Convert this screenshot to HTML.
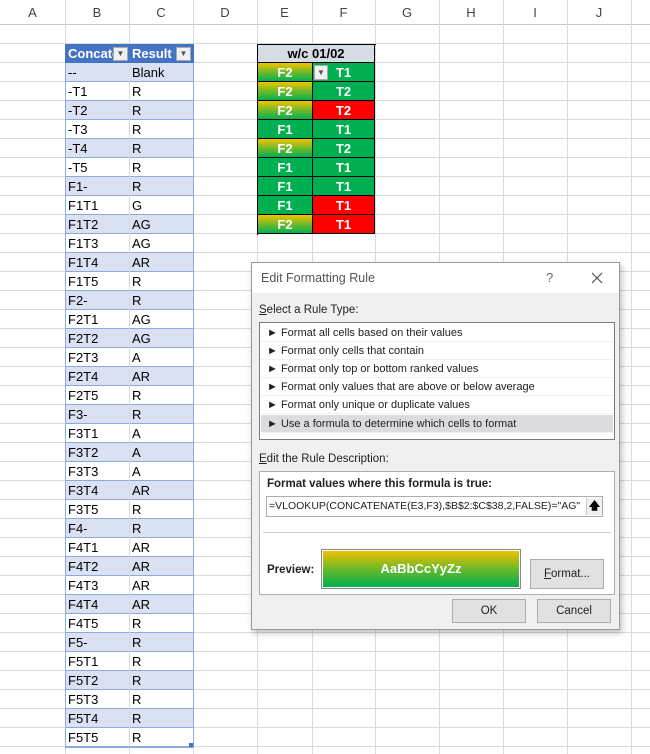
<!DOCTYPE html>
<html><head><meta charset="utf-8"><style>
*{margin:0;padding:0;box-sizing:border-box}
body{width:650px;height:754px;overflow:hidden;background:#fff;font-family:"Liberation Sans",sans-serif;position:relative}
.hdr{position:absolute;top:0;left:0;width:650px;height:25px;background:#fff;border-bottom:1px solid #c8c8c8}
.hdr span{position:absolute;top:5px;font-size:13px;color:#444;text-align:center}
.grid{position:absolute;top:25px;left:0;width:650px;height:729px;background:repeating-linear-gradient(to bottom,transparent 0 18px,#dadada 18px 19px)}
.vl{position:absolute;top:0;width:1px;height:754px;background:#dadada}
.c{position:absolute;height:19px;font-size:13px;line-height:19px;padding-left:3px;color:#000;white-space:nowrap;overflow:hidden}
.e{position:absolute;height:19px;font-size:13px;line-height:19px;text-align:center;color:#fff;font-weight:bold;border-right:1px solid #000;border-bottom:1px solid #000}
.y{background:linear-gradient(to bottom,#f2c200,#5cb830 60%,#00b050)}
.g{background:#00b050}.r{background:#ff0000}
.dlg{position:absolute;left:251px;top:262px;width:369px;height:368px;background:#f0f0f0;border:1px solid #9a9a9a;box-shadow:2px 3px 6px rgba(0,0,0,.25)}
.dlg .t{position:absolute;left:0;top:0;width:367px;height:30px;background:#fff}
.dt{position:absolute;font-size:11.5px;color:#222;white-space:nowrap}
.li{position:absolute;left:1px;width:352px;height:18px;font-size:11px;line-height:18px;padding-left:6px;border-bottom:1px solid #f0f0f0;white-space:nowrap;color:#222}
.btn{position:absolute;background:#e1e1e1;border:1px solid #adadad;font-size:11.5px;text-align:center;color:#222}
</style></head><body>
<div class="grid"></div>
<div class="hdr">
<span style="left:0;width:65px">A</span><span style="left:65px;width:64px">B</span><span style="left:129px;width:64px">C</span><span style="left:193px;width:64px">D</span><span style="left:257px;width:55px">E</span><span style="left:312px;width:63px">F</span><span style="left:375px;width:64px">G</span><span style="left:439px;width:64px">H</span><span style="left:503px;width:64px">I</span><span style="left:567px;width:64px">J</span>
</div>
<div class="vl" style="left:65px"></div><div class="vl" style="left:129px"></div><div class="vl" style="left:193px"></div><div class="vl" style="left:257px"></div><div class="vl" style="left:312px"></div><div class="vl" style="left:375px"></div><div class="vl" style="left:439px"></div><div class="vl" style="left:503px"></div><div class="vl" style="left:567px"></div><div class="vl" style="left:631px"></div>

<div style="position:absolute;left:65px;top:44px;width:129px;height:19px;background:#4472c4"></div>
<div style="position:absolute;left:65px;top:63px;width:129px;height:685px;border-left:1px solid #8ea9db;border-right:1px solid #8ea9db;border-bottom:1px solid #8ea9db;background:repeating-linear-gradient(to bottom,#d9e1f2 0 18px,#8ea9db 18px 19px,#fff 19px 37px,#8ea9db 37px 38px)"></div>
<div style="position:absolute;left:129px;top:63px;width:1px;height:684px;background:#dadada"></div>
<div class="c" style="left:65px;top:44px;width:64px;color:#fff;font-weight:bold">Concate</div>
<div style="position:absolute;left:113px;top:47px;width:15px;height:14px;background:#f0f0f0;border:1px solid #aaa;font-size:8px;text-align:center;line-height:12px;color:#555">▼</div>
<div class="c" style="left:129px;top:44px;width:64px;color:#fff;font-weight:bold">Result</div>
<div style="position:absolute;left:176px;top:47px;width:15px;height:14px;background:#f0f0f0;border:1px solid #aaa;font-size:8px;text-align:center;line-height:12px;color:#555">▼</div>
<div style="position:absolute;left:65px;top:63px">
<div style="position:relative;font-size:13px;line-height:19px">
<div class="c" style="left:0;top:0">--</div><div class="c" style="left:64px;top:0">Blank</div>
<div class="c" style="left:0;top:19px">-T1</div><div class="c" style="left:64px;top:19px">R</div>
<div class="c" style="left:0;top:38px">-T2</div><div class="c" style="left:64px;top:38px">R</div>
<div class="c" style="left:0;top:57px">-T3</div><div class="c" style="left:64px;top:57px">R</div>
<div class="c" style="left:0;top:76px">-T4</div><div class="c" style="left:64px;top:76px">R</div>
<div class="c" style="left:0;top:95px">-T5</div><div class="c" style="left:64px;top:95px">R</div>
<div class="c" style="left:0;top:114px">F1-</div><div class="c" style="left:64px;top:114px">R</div>
<div class="c" style="left:0;top:133px">F1T1</div><div class="c" style="left:64px;top:133px">G</div>
<div class="c" style="left:0;top:152px">F1T2</div><div class="c" style="left:64px;top:152px">AG</div>
<div class="c" style="left:0;top:171px">F1T3</div><div class="c" style="left:64px;top:171px">AG</div>
<div class="c" style="left:0;top:190px">F1T4</div><div class="c" style="left:64px;top:190px">AR</div>
<div class="c" style="left:0;top:209px">F1T5</div><div class="c" style="left:64px;top:209px">R</div>
<div class="c" style="left:0;top:228px">F2-</div><div class="c" style="left:64px;top:228px">R</div>
<div class="c" style="left:0;top:247px">F2T1</div><div class="c" style="left:64px;top:247px">AG</div>
<div class="c" style="left:0;top:266px">F2T2</div><div class="c" style="left:64px;top:266px">AG</div>
<div class="c" style="left:0;top:285px">F2T3</div><div class="c" style="left:64px;top:285px">A</div>
<div class="c" style="left:0;top:304px">F2T4</div><div class="c" style="left:64px;top:304px">AR</div>
<div class="c" style="left:0;top:323px">F2T5</div><div class="c" style="left:64px;top:323px">R</div>
<div class="c" style="left:0;top:342px">F3-</div><div class="c" style="left:64px;top:342px">R</div>
<div class="c" style="left:0;top:361px">F3T1</div><div class="c" style="left:64px;top:361px">A</div>
<div class="c" style="left:0;top:380px">F3T2</div><div class="c" style="left:64px;top:380px">A</div>
<div class="c" style="left:0;top:399px">F3T3</div><div class="c" style="left:64px;top:399px">A</div>
<div class="c" style="left:0;top:418px">F3T4</div><div class="c" style="left:64px;top:418px">AR</div>
<div class="c" style="left:0;top:437px">F3T5</div><div class="c" style="left:64px;top:437px">R</div>
<div class="c" style="left:0;top:456px">F4-</div><div class="c" style="left:64px;top:456px">R</div>
<div class="c" style="left:0;top:475px">F4T1</div><div class="c" style="left:64px;top:475px">AR</div>
<div class="c" style="left:0;top:494px">F4T2</div><div class="c" style="left:64px;top:494px">AR</div>
<div class="c" style="left:0;top:513px">F4T3</div><div class="c" style="left:64px;top:513px">AR</div>
<div class="c" style="left:0;top:532px">F4T4</div><div class="c" style="left:64px;top:532px">AR</div>
<div class="c" style="left:0;top:551px">F4T5</div><div class="c" style="left:64px;top:551px">R</div>
<div class="c" style="left:0;top:570px">F5-</div><div class="c" style="left:64px;top:570px">R</div>
<div class="c" style="left:0;top:589px">F5T1</div><div class="c" style="left:64px;top:589px">R</div>
<div class="c" style="left:0;top:608px">F5T2</div><div class="c" style="left:64px;top:608px">R</div>
<div class="c" style="left:0;top:627px">F5T3</div><div class="c" style="left:64px;top:627px">R</div>
<div class="c" style="left:0;top:646px">F5T4</div><div class="c" style="left:64px;top:646px">R</div>
<div class="c" style="left:0;top:665px">F5T5</div><div class="c" style="left:64px;top:665px">R</div>
</div></div>
<div style="position:absolute;left:189px;top:743px;width:4px;height:4px;background:#4472c4"></div>

<div style="position:absolute;left:257px;top:44px;width:119px;height:191px;border:1px solid #000;border-right:none;border-bottom:none"></div>
<div style="position:absolute;left:258px;top:45px;width:117px;height:18px;background:#d6dce4;border-right:1px solid #000;border-bottom:1px solid #000;font-size:13px;font-weight:bold;text-align:center;line-height:18px">w/c 01/02</div>
<div class="e y" style="left:258px;top:63px;width:55px">F2</div><div class="e g" style="left:313px;top:63px;width:62px">T1</div>
<div style="position:absolute;left:314px;top:65px;width:14px;height:15px;background:#f0f0f0;border:1px solid #aaa;font-size:8px;text-align:center;line-height:13px;color:#555">▼</div>
<div class="e y" style="left:258px;top:82px;width:55px">F2</div><div class="e g" style="left:313px;top:82px;width:62px">T2</div>
<div class="e y" style="left:258px;top:101px;width:55px">F2</div><div class="e r" style="left:313px;top:101px;width:62px">T2</div>
<div class="e g" style="left:258px;top:120px;width:55px">F1</div><div class="e g" style="left:313px;top:120px;width:62px">T1</div>
<div class="e y" style="left:258px;top:139px;width:55px">F2</div><div class="e g" style="left:313px;top:139px;width:62px">T2</div>
<div class="e g" style="left:258px;top:158px;width:55px">F1</div><div class="e g" style="left:313px;top:158px;width:62px">T1</div>
<div class="e g" style="left:258px;top:177px;width:55px">F1</div><div class="e g" style="left:313px;top:177px;width:62px">T1</div>
<div class="e g" style="left:258px;top:196px;width:55px">F1</div><div class="e r" style="left:313px;top:196px;width:62px">T1</div>
<div class="e y" style="left:258px;top:215px;width:55px">F2</div><div class="e r" style="left:313px;top:215px;width:62px">T1</div>

<div class="dlg">
<div class="t"></div>
<div class="dt" style="left:9px;top:8px;font-size:12.5px;color:#555">Edit Formatting Rule</div>
<div class="dt" style="left:294px;top:7px;font-size:13px;color:#666">?</div>
<svg style="position:absolute;left:339px;top:9px" width="12" height="12"><path d="M1 1L11 11M11 1L1 11" stroke="#444" stroke-width="1"/></svg>
<div class="dt" style="left:7px;top:41px"><u>S</u>elect a Rule Type:</div>
<div style="position:absolute;left:7px;top:59px;width:356px;height:118px;background:#fff;border:1px solid #7a7a7a">
<div class="li" style="top:1px">► Format all cells based on their values</div>
<div class="li" style="top:19px">► Format only cells that contain</div>
<div class="li" style="top:37px">► Format only top or bottom ranked values</div>
<div class="li" style="top:55px">► Format only values that are above or below average</div>
<div class="li" style="top:73px">► Format only unique or duplicate values</div>
<div class="li" style="top:92px;background:#dcdce0">► Use a formula to determine which cells to format</div>
</div>
<div class="dt" style="left:7px;top:190px"><u>E</u>dit the Rule Description:</div>
<div style="position:absolute;left:7px;top:208px;width:356px;height:124px;background:#fff;border:1px solid #adadad">
<div class="dt" style="left:7px;top:6px;font-weight:bold">Format values where this formula is true:</div>
<div style="position:absolute;left:6px;top:24px;width:337px;height:21px;border:1px solid #adadad"></div>
<div class="dt" style="left:9px;top:28px;font-size:10.5px">=VLOOKUP(CONCATENATE(E3,F3),$B$2:$C$38,2,FALSE)="AG"</div>
<div style="position:absolute;left:326px;top:26px;width:16px;height:17px;background:#f0f0f0;border-left:1px solid #ccc;font-size:11px;text-align:center;line-height:17px;font-weight:bold">🡅</div>
<div style="position:absolute;left:3px;top:60px;width:348px;height:1px;background:#d0d0d0"></div>
<div class="dt" style="left:7px;top:92px;font-weight:bold">Preview:</div>
<div style="position:absolute;left:61px;top:77px;width:200px;height:40px;border:1px solid #888;padding:1px;background:#fff"><div style="width:100%;height:100%;background:linear-gradient(to bottom,#f0c000,#60b82e 55%,#00b050);color:#fff;font-weight:bold;font-size:13px;text-align:center;line-height:36px">AaBbCcYyZz</div></div>
<div class="btn" style="left:270px;top:87px;width:74px;height:30px;line-height:28px"><u>F</u>ormat...</div>
</div>
<div class="btn" style="left:200px;top:336px;width:74px;height:24px;line-height:22px">OK</div>
<div class="btn" style="left:285px;top:336px;width:74px;height:24px;line-height:22px">Cancel</div>
</div>
</body></html>
